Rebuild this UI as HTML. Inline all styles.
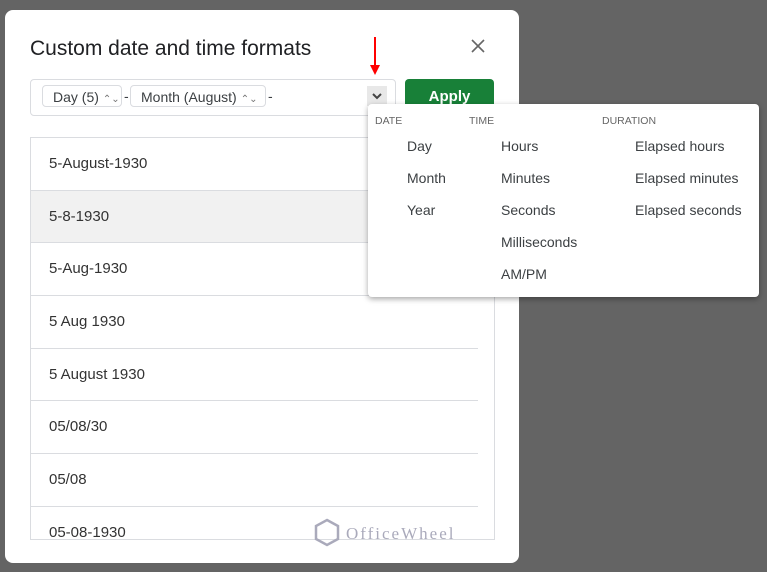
<!DOCTYPE html>
<html><head><style>
body{margin:0;width:767px;height:572px;background:#646464;font-family:"Liberation Sans",Roboto,sans-serif;position:relative;overflow:hidden}
.dlg{position:absolute;left:5px;top:10px;width:514px;height:553px;background:#fff;border-radius:8px}
.t{position:absolute;left:30px;top:37px;font-size:21px;color:#202124}
.x{position:absolute;left:468px;top:36px}
.inp{position:absolute;left:30px;top:79px;width:364px;height:35px;border:1px solid #dadce0;border-radius:4px}
.chip{position:absolute;top:85px;height:22px;border:1px solid #dadce0;border-radius:4px;font-size:14px;color:#3c4043;line-height:22px;padding-left:10px;box-sizing:border-box}
.arr{font-size:10px;color:#777;margin-left:4px}
.dash{position:absolute;top:88px;font-size:14px;color:#3c4043}
.btn{position:absolute;left:405px;top:79px;width:89px;height:36px;background:#188038;border-radius:4px;color:#fff;font-weight:bold;font-size:15px;text-align:center;line-height:36px}
.dd{position:absolute;left:367px;top:86px;width:20px;height:20px;background:#e8e8e8}
.list{position:absolute;left:30px;top:137px;width:463px;height:401px;border:1px solid #dadce0;overflow:hidden}
.row{height:52.7px;border-bottom:1px solid #dadce0;width:447px;font-size:15px;color:#333;line-height:52px;padding-left:18px;box-sizing:border-box}
.pop{position:absolute;left:368px;top:104px;width:391px;height:193px;background:#fff;border-radius:4px;box-shadow:0 2px 6px rgba(0,0,0,.35)}
.h{position:absolute;top:11px;font-size:10.5px;color:#666}
.i{position:absolute;font-size:14px;color:#3c4043}
</style></head><body>
<div class="dlg"></div>
<div class="t">Custom date and time formats</div>
<svg class="x" width="20" height="20"><path d="M4 4l12 12M16 4L4 16" stroke="#666" stroke-width="1.6"/></svg>
<div class="inp"></div>
<div class="chip" style="left:42px;width:80px">Day (5)<span class="arr">⌃⌄</span></div>
<div class="dash" style="left:124px">-</div>
<div class="chip" style="left:130px;width:136px">Month (August)<span class="arr">⌃⌄</span></div>
<div class="dash" style="left:268px">-</div>
<div class="dd"><svg width="20" height="20"><path d="M6 8l4 4 4-4" stroke="#444" stroke-width="2" fill="none"/></svg></div>
<svg style="position:absolute;left:369px;top:37px" width="12" height="42"><path d="M6 0v30" stroke="#f00" stroke-width="2"/><path d="M1 28l5 10 5-10z" fill="#f00"/></svg>
<div class="btn">Apply</div>
<div class="list">
<div class="row">5-August-1930</div>
<div class="row" style="background:#f1f1f1;width:463px">5-8-1930</div>
<div class="row">5-Aug-1930</div>
<div class="row">5 Aug 1930</div>
<div class="row">5 August 1930</div>
<div class="row">05/08/30</div>
<div class="row">05/08</div>
<div class="row">05-08-1930</div>
</div>
<div style="position:absolute;left:346px;top:524px;font-family:'Liberation Serif',serif;font-size:17px;letter-spacing:2px;color:#aab">OfficeWheel</div>
<svg style="position:absolute;left:313px;top:518px" width="28" height="30"><path d="M14 2l11 6v13l-11 6-11-6V8z" stroke="#aab" stroke-width="2.5" fill="none"/></svg>
<div class="pop">
<div class="h" style="left:7px">DATE</div><div class="h" style="left:101px">TIME</div><div class="h" style="left:234px">DURATION</div>
<div class="i" style="left:39px;top:34px">Day</div><div class="i" style="left:39px;top:66px">Month</div><div class="i" style="left:39px;top:98px">Year</div>
<div class="i" style="left:133px;top:34px">Hours</div><div class="i" style="left:133px;top:66px">Minutes</div><div class="i" style="left:133px;top:98px">Seconds</div><div class="i" style="left:133px;top:130px">Milliseconds</div><div class="i" style="left:133px;top:162px">AM/PM</div>
<div class="i" style="left:267px;top:34px">Elapsed hours</div><div class="i" style="left:267px;top:66px">Elapsed minutes</div><div class="i" style="left:267px;top:98px">Elapsed seconds</div>
</div>
</body></html>
